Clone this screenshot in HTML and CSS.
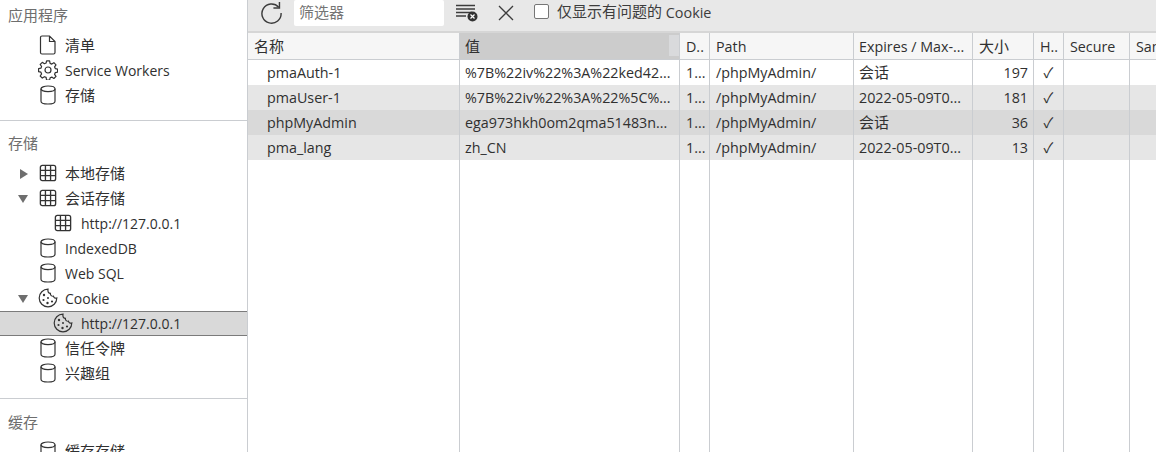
FILE: index.html
```html
<!DOCTYPE html>
<html lang="zh-CN">
<head>
<meta charset="utf-8">
<title>Cookie</title>
<link rel="stylesheet" href="styles.css">
</head>
<body>
<svg class="defs" width="0" height="0">
  <symbol id="i-file" viewBox="0 0 18 20"><path d="M3 1h7.500L16 6.500V17.500a1.500 1.500 0 0 1-1.500 1.500H3a1.500 1.500 0 0 1-1.500-1.500V2.500A1.500 1.500 0 0 1 3 1zM10.500 1v5.500H16" fill="none" stroke="#333" stroke-width="1.200"/></symbol>
  <symbol id="i-db" viewBox="0 0 18 20"><ellipse cx="9" cy="3.800" rx="7" ry="2.800" fill="none" stroke="#333" stroke-width="1.200"/><path d="M2 3.800V16.200C2 17.800 5 19 9 19s7-1.200 7-2.800V3.800" fill="none" stroke="#333" stroke-width="1.200"/></symbol>
  <symbol id="i-grid" viewBox="-1.500 -1.500 21 21"><rect x="1" y="1" width="16" height="16" rx="2" fill="none" stroke="#333" stroke-width="1.400"/><path d="M6.300 1V17M11.700 1V17M1 6.300H17M1 11.700H17" stroke="#333" stroke-width="1.400"/></symbol>
  <symbol id="i-cookie" viewBox="0 0 20 20"><path d="M10 1.200a8.800 8.800 0 1 0 8.800 8.800c-1.500.6-3-.2-3.400-1.800-1.700.3-3.200-1-3-2.800-1.700 0-2.900-1.500-2.400-4.200z" fill="none" stroke="#333" stroke-width="1.200"/><circle cx="6" cy="7" r="1.200" fill="#333"/><circle cx="5.500" cy="12" r="1.100" fill="#333"/><circle cx="10" cy="10" r="1" fill="#333"/><circle cx="9.500" cy="15" r="1.200" fill="#333"/><circle cx="14" cy="13.500" r="1.100" fill="#333"/></symbol>
  <symbol id="i-gear" viewBox="0 0 20 20"><path d="M8.500 1h3l.5 2.500 1.700.7 2.100-1.400 2.100 2.100-1.400 2.100.7 1.700 2.300.5v3l-2.300.5-.7 1.700 1.400 2.100-2.100 2.100-2.100-1.400-1.700.7-.5 2.400h-3L8 17.500l-1.700-.7-2.100 1.400-2.100-2.100 1.400-2.100-.7-1.700L.5 11.800v-3l2.300-.5.700-1.700-1.400-2.100 2.100-2.100 2.100 1.400L8 3.100z" fill="none" stroke="#333" stroke-width="1.200" stroke-linejoin="round" transform="translate(.1 -.1)"/><circle cx="10" cy="10" r="3" fill="none" stroke="#333" stroke-width="1.200"/></symbol>
</svg>
<div class="app">
  <aside class="side">
    <section class="group">
      <h2 class="group-title"><span class="cjk">应用程序</span></h2>
      <div class="row"><span class="arrow"></span><svg class="ic"><use href="#i-file"/></svg><span class="cjk">清单</span></div>
      <div class="row"><span class="arrow"></span><svg class="ic"><use href="#i-gear"/></svg><span>Service Workers</span></div>
      <div class="row"><span class="arrow"></span><svg class="ic"><use href="#i-db"/></svg><span class="cjk">存储</span></div>
    </section>
    <section class="group">
      <h2 class="group-title"><span class="cjk">存储</span></h2>
      <div class="row"><span class="arrow right"></span><svg class="ic"><use href="#i-grid"/></svg><span class="cjk">本地存储</span></div>
      <div class="row"><span class="arrow down"></span><svg class="ic"><use href="#i-grid"/></svg><span class="cjk">会话存储</span></div>
      <div class="row sub"><span class="arrow"></span><svg class="ic"><use href="#i-grid"/></svg><span>http://127.0.0.1</span></div>
      <div class="row"><span class="arrow"></span><svg class="ic"><use href="#i-db"/></svg><span>IndexedDB</span></div>
      <div class="row"><span class="arrow"></span><svg class="ic"><use href="#i-db"/></svg><span>Web SQL</span></div>
      <div class="row"><span class="arrow down"></span><svg class="ic"><use href="#i-cookie"/></svg><span>Cookie</span></div>
      <div class="row sub selected"><span class="arrow"></span><svg class="ic"><use href="#i-cookie"/></svg><span>http://127.0.0.1</span></div>
      <div class="row"><span class="arrow"></span><svg class="ic"><use href="#i-db"/></svg><span class="cjk">信任令牌</span></div>
      <div class="row"><span class="arrow"></span><svg class="ic"><use href="#i-db"/></svg><span class="cjk">兴趣组</span></div>
    </section>
    <section class="group">
      <h2 class="group-title"><span class="cjk">缓存</span></h2>
      <div class="row"><span class="arrow"></span><svg class="ic"><use href="#i-db"/></svg><span class="cjk">缓存存储</span></div>
    </section>
  </aside>
  <main class="main">
    <div class="toolbar">
      <svg class="tool-refresh" viewBox="0 0 24 24" width="23" height="23"><path d="M19.500 6.500A10 10 0 1 0 22 12.500" fill="none" stroke="#3c3c3c" stroke-width="1.500"/><path d="M20.300 1v6.300H14" fill="none" stroke="#3c3c3c" stroke-width="1.500"/></svg>
      <div class="filter"><span class="cjk">筛选器</span></div>
      <svg class="tool-clear" viewBox="0 0 24 20" width="24" height="20"><path d="M1 2.500H20M1 6H20M1 9.500H17M1 13H11" stroke="#3c3c3c" stroke-width="1.300"/><circle cx="17.500" cy="13.500" r="5" fill="#333"/><path d="M15.500 11.500l4 4M19.500 11.500l-4 4" stroke="#fff" stroke-width="1.200"/></svg>
      <svg class="tool-x" viewBox="0 0 16 16" width="16" height="16"><path d="M1 1L15 15M15 1L1 15" stroke="#3c3c3c" stroke-width="1.300"/></svg>
      <label class="check"><span class="box"></span><span><span class="cjk">仅显示有问题的</span> Cookie</span></label>
    </div>
    <div class="grid">
      <div class="tr head">
        <div class="td"><span class="cjk">名称</span></div><div class="td sorted"><span class="cjk">值</span><span class="sort-pad"></span></div><div class="td">D..</div><div class="td">Path</div><div class="td">Expires / Max-...</div><div class="td"><span class="cjk">大小</span></div><div class="td">H..</div><div class="td">Secure</div><div class="td">SameSite</div>
      </div>
      <div class="tr">
        <div class="td name">pmaAuth-1</div><div class="td">%7B%22iv%22%3A%22ked42...</div><div class="td">1...</div><div class="td">/phpMyAdmin/</div><div class="td"><span class="cjk">会话</span></div><div class="td num">197</div><div class="td tick">✓</div><div class="td"></div><div class="td"></div>
      </div>
      <div class="tr alt">
        <div class="td name">pmaUser-1</div><div class="td">%7B%22iv%22%3A%22%5C%...</div><div class="td">1...</div><div class="td">/phpMyAdmin/</div><div class="td">2022-05-09T0...</div><div class="td num">181</div><div class="td tick">✓</div><div class="td"></div><div class="td"></div>
      </div>
      <div class="tr active">
        <div class="td name">phpMyAdmin</div><div class="td">ega973hkh0om2qma51483n...</div><div class="td">1...</div><div class="td">/phpMyAdmin/</div><div class="td"><span class="cjk">会话</span></div><div class="td num">36</div><div class="td tick">✓</div><div class="td"></div><div class="td"></div>
      </div>
      <div class="tr alt">
        <div class="td name">pma_lang</div><div class="td">zh_CN</div><div class="td">1...</div><div class="td">/phpMyAdmin/</div><div class="td">2022-05-09T0...</div><div class="td num">13</div><div class="td tick">✓</div><div class="td"></div><div class="td"></div>
      </div>
      <div class="tr filler">
        <div class="td"></div><div class="td"></div><div class="td"></div><div class="td"></div><div class="td"></div><div class="td"></div><div class="td"></div><div class="td"></div><div class="td"></div>
      </div>
    </div>
  </main>
</div>
</body>
</html>
```
FILE: styles.css
```css
* { box-sizing: border-box; }
html, body { margin: 0; height: 100%; overflow: hidden; }
body {
  font-family: "Open Sans", "Noto Sans CJK SC", sans-serif;
  font-size: 14px;
  color: #303030;
  background: #fff;
}
.defs { position: absolute; }
.cjk { font-size: 15px; vertical-align: 1px; }
.app { display: flex; height: 452px; }
.side { width: 248px; flex: none; border-right: 1px solid #cacdd1; overflow: hidden; }
.group { border-bottom: 1px solid #cacdd1; padding-bottom: 12px; }
.group:first-child { margin-top: 3px; }
.group:last-child { border-bottom: 0; }
.group-title {
  margin: 0;
  padding: 0 8px;
  height: 25px;
  line-height: 25px;
  font-size: 14px;
  font-weight: 400;
  color: #6e6e6e;
  margin-bottom: 5px;
}
.group + .group .group-title { margin-top: 10px; }
.group:last-child .group-title { margin-top: 11px; margin-bottom: 4px; }
.row { display: flex; align-items: center; height: 25px; padding-left: 18px; white-space: nowrap; }
.row > .cjk { padding-bottom: 3px; }
.row.sub { padding-left: 33px; }
.row.selected { background: #d9d9d9; border-top: 1px solid #7b7b7b; border-bottom: 1px solid #7b7b7b; }
.arrow { width: 11px; height: 10px; flex: none; margin-right: 9px; position: relative; }
.arrow.right { width: 0; height: 0; margin-left: 2px; margin-right: 10px; border-left: 8px solid #6e6e6e; border-top: 5px solid transparent; border-bottom: 5px solid transparent; }
.arrow.down { width: 0; height: 0; margin-right: 10px; margin-left: 0; border-top: 8px solid #6e6e6e; border-left: 5px solid transparent; border-right: 5px solid transparent; }
.ic { width: 20px; height: 20px; flex: none; margin-right: 7px; margin-bottom: 1px; }
.row.sub .ic { margin-right: 8px; }
.main { flex: 1; min-width: 0; display: flex; flex-direction: column; overflow: hidden; }
.toolbar {
  height: 33px;
  flex: none;
  display: flex;
  align-items: center;
  background: #e8e8e8;
  border-bottom: 2px solid #d6d6d6;
  padding-left: 12px;
  color: #3c3c3c;
}
.tool-refresh { flex: none; margin-bottom: 7px; }
.filter {
  width: 150px;
  height: 26px;
  flex: none;
  margin: 0 0 6px 11px;
  background: #fff;
  border-radius: 2px;
  color: #757575;
  padding-left: 5px;
  line-height: 25px;
}
.tool-clear { flex: none; margin: 0 0 6px 11px; }
.tool-x { flex: none; margin: 0 0 6px 19px; }
.check { display: flex; align-items: center; margin: 0 0 8px 20px; white-space: nowrap; font-size: 14.4px; line-height: 20px; }
.box { width: 15px; height: 15px; background: #fff; border: 1px solid #767676; border-radius: 2px; margin-right: 8px; }
.grid { flex: 1; min-height: 0; display: flex; flex-direction: column; font-size: 14.3px; }
.tr {
  display: grid;
  grid-template-columns: 212px 220px 30px 144px 119px 61px 30px 66px 100px;
  height: 25px;
  flex: none;
  width: 1010px;
  line-height: 25px;
}
.td { border-right: 1px solid #cacdd1; padding: 0 6px; white-space: nowrap; overflow: hidden; color: #303030; }
.td:nth-child(2), .td:nth-child(5) { padding-left: 5px; }
.head { height: 27px; line-height: 27px; background: #f6f6f6; border-bottom: 1px solid #cacdd1; }
.head .sorted { background: #cccccc; position: relative; }
.sort-pad { position: absolute; right: 0; top: 2px; bottom: 3px; width: 10px; background: #d9dadc; }
.name { padding-left: 19px; }
.num { text-align: right; padding-right: 5px; }
.tick { text-align: center; padding: 0; }
.alt { background: #e6e6e6; }
.active { background: #d9d9d9; }
.filler { flex: 1; }
```
